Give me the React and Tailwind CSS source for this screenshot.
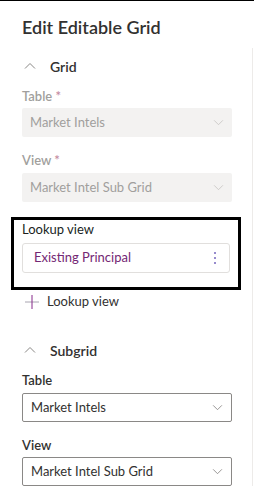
import React from 'react';

const font = { fontFamily: '"Segoe UI", Lato, "Open Sans", sans-serif' };

const ChevronDown = ({ className }) => (
  <svg viewBox="0 0 12 8" className={className} fill="none" stroke="currentColor" strokeWidth="1">
    <path d="M1 1.5 L6 6.5 L11 1.5" />
  </svg>
);

const ChevronUp = ({ className }) => (
  <svg viewBox="0 0 12 8" className={className} fill="none" stroke="currentColor" strokeWidth="1">
    <path d="M1 6.5 L6 1.5 L11 6.5" />
  </svg>
);

const SectionHeader = ({ label, className }) => (
  <div className={`flex items-center h-[24px] ${className}`}>
    <ChevronUp className="w-[12px] h-[8px] ml-[24px] text-[#8a8886]" />
    <span className="ml-[14px] text-[14px] font-semibold text-[#323130]">{label}</span>
  </div>
);

const Label = ({ children, required, disabled, className }) => (
  <div
    className={`ml-[22px] h-[20px] leading-[20px] text-[13px] font-semibold ${
      disabled ? 'text-[#a19f9d]' : 'text-[#323130]'
    } ${className}`}
  >
    {children}
    {required && <span className={disabled ? 'text-[#c48aa0]' : 'text-[#a4262c]'}> *</span>}
  </div>
);

const Dropdown = ({ value, disabled, className }) => (
  <div
    className={`ml-[22px] w-[210px] h-[29px] flex items-center justify-between pl-[8px] pr-[8px] rounded-[2px] text-[13px] ${
      disabled
        ? 'bg-[#f3f2f1] text-[#a19f9d]'
        : 'bg-white border border-[#8a8886] text-[#323130]'
    } ${className}`}
  >
    <span>{value}</span>
    <ChevronDown className={`w-[11px] h-[7px] ${disabled ? 'text-[#c8c6c4]' : 'text-[#8a8886]'}`} />
  </div>
);

export default function App() {
  return (
    <div className="w-[254px] h-[486px] overflow-hidden bg-white border-t border-black flex" style={font}>
      <div className="w-[252px] flex flex-col">
        <div className="mt-[15px] ml-[22px] text-[18px] leading-[22px] font-semibold text-[#323130]">
          Edit Editable Grid
        </div>

        <SectionHeader label="Grid" className="mt-[16px]" />

        <Label required disabled className="mt-[8px]">Table</Label>
        <Dropdown value="Market Intels" disabled className="mt-[2px]" />

        <Label required disabled className="mt-[13px]">View</Label>
        <Dropdown value="Market Intel Sub Grid" disabled className="mt-[3px]" />

        {/* Lookup view highlight */}
        <div className="mt-[15px] ml-[11px] w-[230px] border-[3px] border-black px-[8px] pb-[14px]">
          <div className="h-[18px] leading-[18px] text-[13px] text-[#201f1e]">Lookup view</div>
          <div className="mt-[5px] h-[30px] flex items-center justify-between border border-[#e1dfdd] rounded-[3px] pl-[11px] pr-[12px]">
            <span className="text-[13px] text-[#742774]">Existing Principal</span>
            <svg viewBox="0 0 4 14" className="w-[4px] h-[14px]">
              <circle cx="2" cy="2" r="1" fill="#7565bc" />
              <circle cx="2" cy="7" r="1" fill="#7565bc" />
              <circle cx="2" cy="12" r="1" fill="#7565bc" />
            </svg>
          </div>
        </div>

        <div className="h-[24px] flex items-center">
          <svg viewBox="0 0 14 14" className="ml-[25px] w-[14px] h-[14px]" fill="none" strokeWidth="1">
            <path d="M0 7 H14" stroke="#a8a4b0" />
            <path d="M7 0 V14" stroke="#86288a" />
          </svg>
          <span className="ml-[8px] text-[13px] text-[#323130]">Lookup view</span>
        </div>

        <SectionHeader label="Subgrid" className="mt-[24px]" />

        <Label className="mt-[8px]">Table</Label>
        <Dropdown value="Market Intels" className="mt-[3px]" />

        <Label className="mt-[13px]">View</Label>
        <Dropdown value="Market Intel Sub Grid" className="mt-[2px]" />
      </div>
      <div className="w-[2px] pt-[47px]">
        <div className="h-full border-l border-[#edebe9]" />
      </div>
    </div>
  );
}
